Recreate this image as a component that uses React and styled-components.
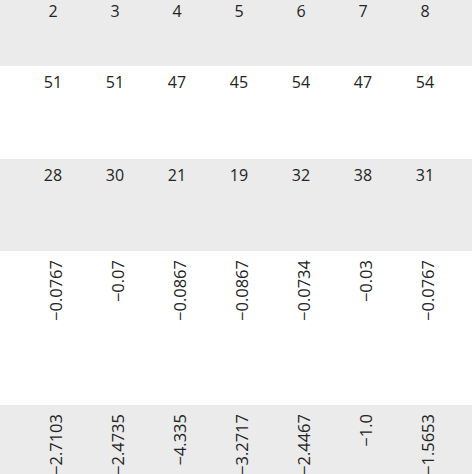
import React from 'react'
import styled, { createGlobalStyle } from 'styled-components'

const Global = createGlobalStyle`
  html, body {
    margin: 0;
    padding: 0;
    background: #fff;
    overflow: hidden;
  }
  body {
    font-family: "Open Sans", "Liberation Sans", sans-serif;
    color: #232323;
  }
`

// rows of the table as they appear in the crop
const rows = [
  { values: ['2', '3', '4', '5', '6', '7', '8'], height: 71, shade: true },
  { values: ['51', '51', '47', '45', '54', '47', '54'], height: 93 },
  { values: ['28', '30', '21', '19', '32', '38', '31'], height: 92, shade: true },
  {
    values: ['\u22120.0767', '\u22120.07', '\u22120.0867', '\u22120.0867', '\u22120.0734', '\u22120.03', '\u22120.0767'],
    height: 154,
    vertical: true,
  },
  {
    values: ['\u22122.7103', '\u22122.4735', '\u22124.335', '\u22123.2717', '\u22122.4467', '\u22121.0', '\u22121.5653'],
    height: 90,
    shade: true,
    vertical: true,
  },
]

export default function App() {
  return (
    <>
      <Global />
      <Table>
        {rows.map((r, i) => (
          <Row key={i} $height={r.height} $shade={r.shade}>
            <LabelCell />
            {r.values.map((v, j) => (
              <Cell key={j} $vertical={r.vertical}>
                {r.vertical ? <Rotated>{v}</Rotated> : <span>{v}</span>}
              </Cell>
            ))}
            <Filler />
          </Row>
        ))}
      </Table>
    </>
  )
}

const Table = styled.div`
  display: flex;
  flex-direction: column;
  width: 472px;
  margin-top: -5px;
`

const Row = styled.div`
  display: grid;
  grid-template-columns: 22px repeat(7, 62px) 1fr;
  height: ${(p) => p.$height}px;
  background: ${(p) => (p.$shade ? '#ebebeb' : '#ffffff')};
`

const LabelCell = styled.div`
  overflow: hidden;
`

const Cell = styled.div`
  display: flex;
  flex-direction: column;
  align-items: center;
  padding-top: ${(p) => (p.$vertical ? 9 : 5)}px;
  padding-left: ${(p) => (p.$vertical ? 4 : 0)}px;
  font-size: 16px;
  line-height: normal;
  overflow: hidden;
`

const Rotated = styled.span`
  writing-mode: vertical-rl;
  transform: rotate(180deg);
  white-space: nowrap;
  font-size: 16.5px;
`

const Filler = styled.div``
